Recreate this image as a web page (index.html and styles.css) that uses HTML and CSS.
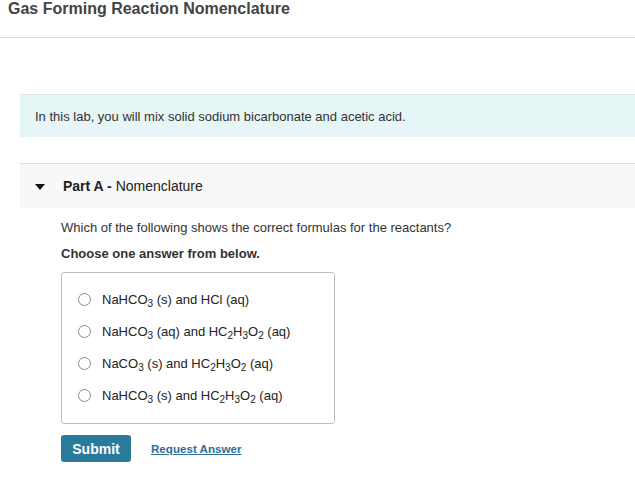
FILE: index.html
```html
<!DOCTYPE html>
<html>
<head>
<meta charset="utf-8">
<link rel="stylesheet" href="styles.css">
</head>
<body>
<div class="title-bar"><h1 class="title">Gas Forming Reaction Nomenclature</h1></div>
<div class="intro">In this lab, you will mix solid sodium bicarbonate and acetic acid.</div>
<div class="part-head">
  <span class="tri"></span>
  <span class="part-label"><b>Part A -</b> Nomenclature</span>
</div>
<div class="part-body">
  <p class="question">Which of the following shows the correct formulas for the reactants?</p>
  <p class="choose">Choose one answer from below.</p>
  <div class="options">
    <label class="opt"><span class="radio"></span><span>NaHCO<sub>3</sub> (s) and HCl (aq)</span></label>
    <label class="opt"><span class="radio"></span><span>NaHCO<sub>3</sub> (aq) and HC<sub>2</sub>H<sub>3</sub>O<sub>2</sub> (aq)</span></label>
    <label class="opt"><span class="radio"></span><span>NaCO<sub>3</sub> (s) and HC<sub>2</sub>H<sub>3</sub>O<sub>2</sub> (aq)</span></label>
    <label class="opt"><span class="radio"></span><span>NaHCO<sub>3</sub> (s) and HC<sub>2</sub>H<sub>3</sub>O<sub>2</sub> (aq)</span></label>
  </div>
  <div class="actions">
    <button class="submit">Submit</button>
    <a class="request" href="#">Request Answer</a>
  </div>
</div>
</body>
</html>
```

FILE: styles.css
```css
html, body {
  margin: 0;
  padding: 0;
  background: #fff;
  font-family: "Liberation Sans", Arial, sans-serif;
  color: #333;
}
.title-bar {
  height: 38px;
  border-bottom: 1px solid #dcdcdc;
  padding-left: 8px;
  box-sizing: border-box;
}
.title {
  margin: 0;
  font-size: 16px;
  line-height: 18px;
  font-weight: bold;
  color: #444;
}
.intro {
  margin: 56px 0 0 20px;
  height: 43px;
  box-sizing: border-box;
  border-top: 1px solid #dbe8e8;
  background: #e6f5f5;
  padding-left: 15px;
  display: flex;
  align-items: center;
  font-size: 13px;
  color: #333;
}
.part-head {
  margin: 26px 0 0 20px;
  height: 45px;
  box-sizing: border-box;
  border-top: 1px solid #dcdcdc;
  background: #f8f8f8;
  display: flex;
  align-items: center;
  padding-left: 15px;
  font-size: 14px;
  color: #222;
}
.tri {
  width: 0;
  height: 0;
  border-left: 5px solid transparent;
  border-right: 5px solid transparent;
  border-top: 6px solid #111;
  margin-right: 18px;
  margin-top: 1px;
}
.part-body {
  padding-left: 61px;
}
.question {
  margin: 12px 0 0 0;
  font-size: 13px;
  line-height: 15px;
  color: #333;
}
.choose {
  margin: 11px 0 0 0;
  font-size: 13px;
  line-height: 15px;
  font-weight: bold;
  color: #333;
}
.options {
  margin-top: 11px;
  width: 274px;
  height: 152px;
  box-sizing: border-box;
  border: 1px solid #bdbdbd;
  border-radius: 3px;
  padding-top: 17px;
  display: flex;
  flex-direction: column;
  gap: 14px;
}
.opt {
  display: flex;
  align-items: center;
  height: 18px;
  padding-left: 16px;
  font-size: 13px;
  color: #222;
}
.radio {
  width: 11px;
  height: 11px;
  border: 1px solid #8c8c8c;
  border-radius: 50%;
  background: #fff;
  margin-right: 11px;
  flex: none;
}
sub {
  font-size: 10px;
  vertical-align: -3px;
  line-height: 0;
}
.actions {
  margin-top: 11px;
  display: flex;
  align-items: center;
  gap: 20px;
}
.submit {
  width: 70px;
  height: 27px;
  border: none;
  border-radius: 3px;
  background: #2a7b9b;
  color: #fff;
  font-family: "Liberation Sans", Arial, sans-serif;
  font-size: 14px;
  font-weight: bold;
  padding: 0;
}
.request {
  font-size: 11.6px;
  font-weight: bold;
  color: #2c6e98;
  text-decoration: underline;
}
```
